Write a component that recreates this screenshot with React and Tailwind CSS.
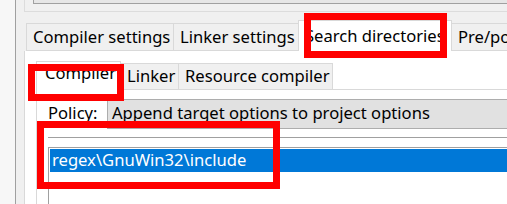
import React from 'react'

const font = { fontFamily: '"Noto Sans", "Liberation Sans", sans-serif' }

function OuterTab({ label, width, selected, first }) {
  if (selected) {
    return (
      <div
        className={`h-[31px] ${width} shrink-0 bg-white border-l border-t border-r border-[#d9d9d9] pl-[6px] pt-[2px] text-black whitespace-nowrap`}
      >
        {label}
      </div>
    )
  }
  return (
    <div
      className={`h-[28px] ${width} shrink-0 bg-[#f0f0f0] border-t border-b border-[#d9d9d9] ${first ? 'border-l border-r' : ''} pl-[6px] text-black whitespace-nowrap overflow-hidden`}
    >
      {label}
    </div>
  )
}

export default function App() {
  return (
    <div
      className="relative w-[507px] h-[204px] overflow-hidden bg-[#f0f0f0] flex text-[16.6px] leading-[26px]"
      style={font}
    >
      {/* window edge */}
      <div className="w-[16px] shrink-0 bg-[#f7f7f7] border-r border-[#a0a0a0]" />

      <div className="flex-1 flex flex-col pl-[8px] min-w-0">
        {/* group box above */}
        <div className="h-[12px] border-l border-b border-[#dcdcdc] pl-[8px] shrink-0">
          <div className="h-[4px] bg-[#e6e6e6] border-l border-b border-[#a0a0a0]" />
        </div>

        {/* outer tab strip */}
        <div className="mt-[8px] ml-[2px] h-[31px] flex items-end shrink-0">
          <OuterTab label="Compiler settings" width="w-[148px]" first />
          <OuterTab label="Linker settings" width="w-[124px]" />
          <OuterTab label="Search directories" width="w-[154px]" selected />
          <OuterTab label="Pre/post build steps" width="flex-1" />
        </div>

        {/* outer panel */}
        <div className="flex-1 bg-white border-l border-[#d9d9d9] pl-[11px] pt-[10px] flex flex-col">
          {/* inner tabs */}
          <div className="h-[29px] flex items-end shrink-0">
            <div className="h-[29px] w-[85px] shrink-0 bg-white border-l border-t border-r border-[#d9d9d9] pl-[8px] leading-[22px]">
              Compiler
            </div>
            <div className="h-[27px] w-[58px] shrink-0 bg-[#f0f0f0] border-t border-b border-r border-[#d9d9d9] pl-[6px] leading-[24px]">
              Linker
            </div>
            <div className="h-[27px] w-[154px] shrink-0 bg-[#f0f0f0] border-t border-b border-r border-[#d9d9d9] pl-[6px] leading-[24px] whitespace-nowrap">
              Resource compiler
            </div>
            <div className="flex-1 border-b border-[#d9d9d9]" />
          </div>

          {/* inner panel */}
          <div className="flex-1 bg-white border-l border-[#d9d9d9] pt-[9px] pl-[11px] flex flex-col">
            <div className="flex h-[30px] shrink-0">
              <div className="w-[59px] shrink-0 leading-[28px]">Policy:</div>
              <div className="flex-1 bg-[#e1e1e1] border-t border-l border-b border-[#adadad] pl-[4px] leading-[26px] whitespace-nowrap overflow-hidden">
                Append target options to project options
              </div>
            </div>

            <div className="mt-[8px] h-[10px] border-t border-[#a0a0a0] shrink-0" />

            <div className="flex-1 border-t border-l border-[#a0a0a0] pt-[1px] pl-[1px]">
              <div className="h-[23px] bg-[#0078d7] text-white pl-[2px] leading-[22px] whitespace-nowrap">
                regex\GnuWin32\include
              </div>
            </div>
          </div>
        </div>
      </div>

      {/* annotation boxes */}
      <div className="absolute left-[304px] top-[13px] w-[143px] h-[45px] border-[7px] border-[#ff0000]" />
      <div className="absolute left-[28px] top-[64px] w-[96px] h-[37px] border-[7px] border-[#ff0000]" />
      <div className="absolute left-[37px] top-[121px] w-[243px] h-[68px] border-[7px] border-[#ff0000]" />
    </div>
  )
}
